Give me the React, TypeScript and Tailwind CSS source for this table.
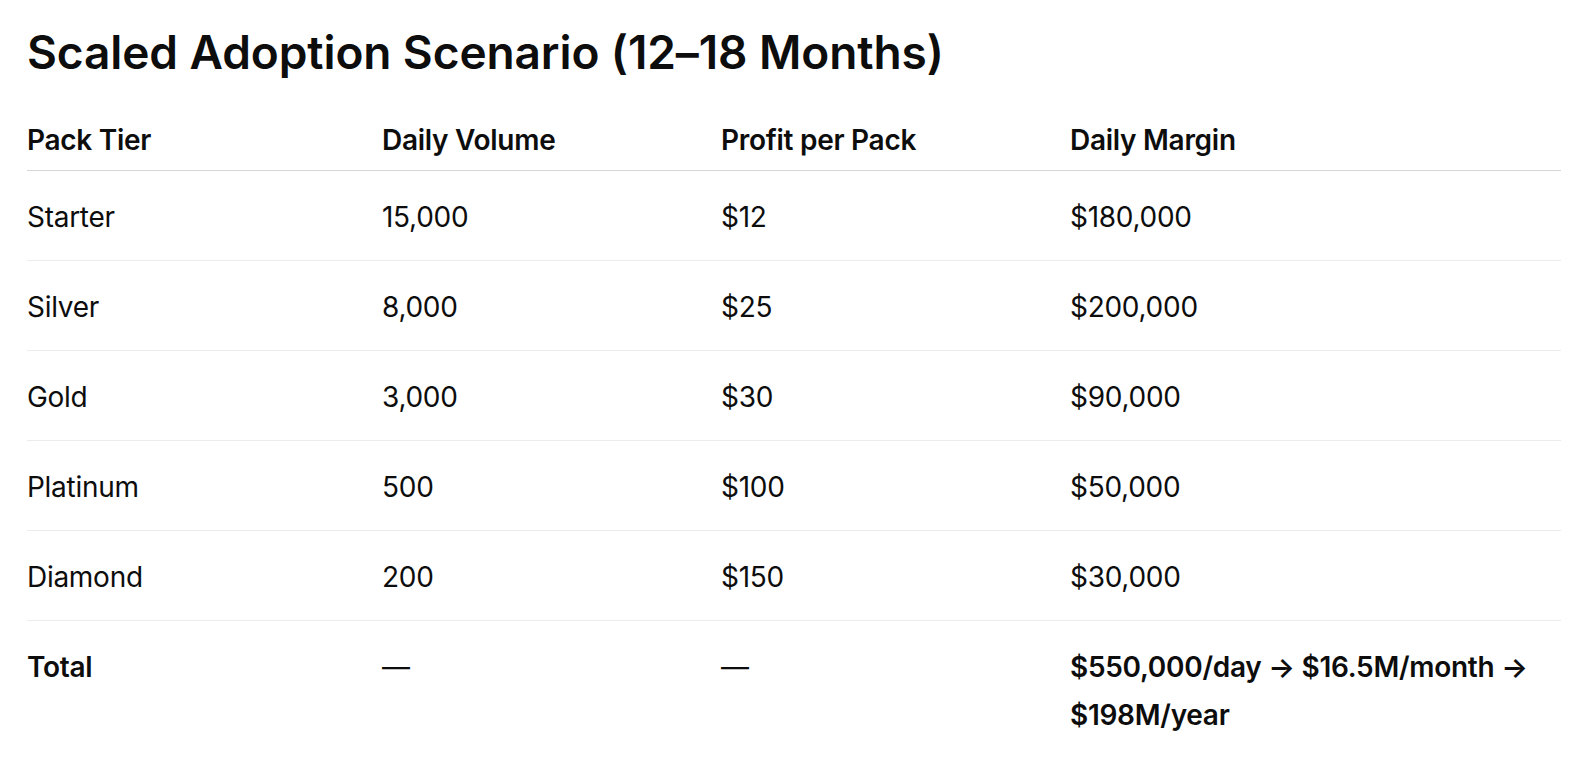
import React from "react";

const rows = [
  ["Starter", "15,000", "$12", "$180,000"],
  ["Silver", "8,000", "$25", "$200,000"],
  ["Gold", "3,000", "$30", "$90,000"],
  ["Platinum", "500", "$100", "$50,000"],
  ["Diamond", "200", "$150", "$30,000"],
];

export default function App() {
  return (
    <div
      className="w-[1576px] h-[758px] overflow-hidden bg-white text-[#0d0d0d]"
      style={{ fontFamily: "Inter, 'Noto Sans', sans-serif" }}
    >
      <div className="pl-[27px] pt-[24px]">
        <h1 className="text-[46px] leading-[56px] font-semibold tracking-[-0.002em]">
          Scaled Adoption Scenario (12–18 Months)
        </h1>
        <table className="table-fixed w-[1534px] border-collapse text-[28px] leading-[48px] tracking-[-0.01em]">
          <colgroup>
            <col className="w-[355px]" />
            <col className="w-[339px]" />
            <col className="w-[349px]" />
            <col className="w-[491px]" />
          </colgroup>
          <thead>
            <tr className="border-b border-[#d6d6d6]">
              <th className="text-left font-semibold pt-[36px] pb-[6px]">Pack Tier</th>
              <th className="text-left font-semibold pt-[36px] pb-[6px]">Daily Volume</th>
              <th className="text-left font-semibold pt-[36px] pb-[6px]">Profit per Pack</th>
              <th className="text-left font-semibold pt-[36px] pb-[6px]">Daily Margin</th>
            </tr>
          </thead>
          <tbody>
            {rows.map((r) => (
              <tr key={r[0]} className="border-b border-[#ececec]">
                {r.map((c, i) => (
                  <td key={i} className="pt-[21.5px] pb-[19.5px] font-normal">
                    {c}
                  </td>
                ))}
              </tr>
            ))}
            <tr>
              <td className="pt-[21.5px] pb-[19.5px] font-semibold align-top">Total</td>
              <td className="pt-[21.5px] pb-[19.5px] align-top">—</td>
              <td className="pt-[21.5px] pb-[19.5px] align-top">—</td>
              <td className="pt-[21.5px] pb-[19.5px] font-semibold align-top">
                $550,000/day → $16.5M/month →<br />$198M/year
              </td>
            </tr>
          </tbody>
        </table>
      </div>
    </div>
  );
}
